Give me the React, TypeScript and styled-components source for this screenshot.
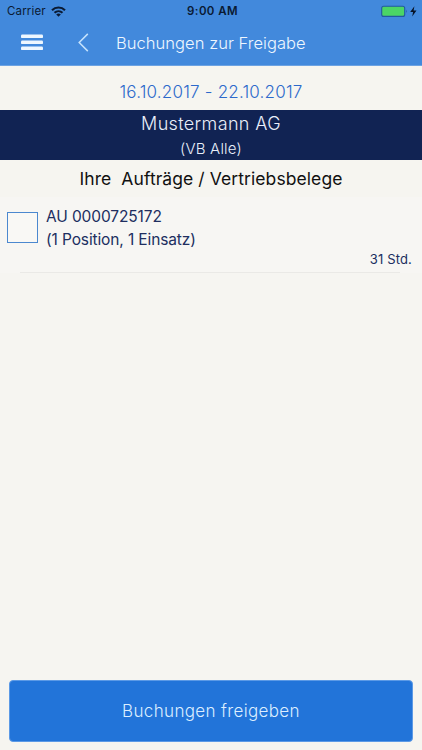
import React from "react";
import styled, { createGlobalStyle } from "styled-components";

const GlobalStyle = createGlobalStyle`
  * { box-sizing: border-box; }
  body { margin: 0; background: #f6f5f0; }
`;

const Label = styled.span<{ $size: number; $spacing?: number; $weight?: number }>`
  font-size: ${(p) => p.$size}px;
  letter-spacing: ${(p) => p.$spacing ?? 0}px;
  font-weight: ${(p) => p.$weight ?? 350};
  white-space: pre;
`;

const Screen = styled.div`
  width: 422px;
  height: 750px;
  display: flex;
  flex-direction: column;
  overflow: hidden;
  background: #f6f5f0;
  font-family: Inter, "Liberation Sans", sans-serif;
`;

const Header = styled.header`
  height: 66px;
  flex: none;
  background: #4289dc;
  border-bottom: 1px solid #6da3e2;
`;

const StatusBar = styled.div`
  height: 22px;
  display: grid;
  grid-template-columns: 1fr auto 1fr;
  align-items: center;
  padding: 0 4px 0 7px;
  color: #0a1a33;
`;

const StatusSide = styled.div<{ $end?: boolean }>`
  display: flex;
  align-items: center;
  gap: 5px;
  justify-content: ${(p) => (p.$end ? "flex-end" : "flex-start")};
`;

const NavBar = styled.nav`
  height: 41px;
  display: flex;
  align-items: center;
  color: #eef7ff;
`;

const IconButton = styled.button<{ $left: number; $width: number }>`
  width: ${(p) => p.$width}px;
  margin: 0 0 0 ${(p) => p.$left}px;
  padding: 0;
  border: 0;
  background: none;
  color: inherit;
  display: flex;
`;

const NavTitle = styled.h1`
  margin: 0 0 0 27px;
  font-size: 16.5px;
  line-height: 20px;
  display: flex;
`;

const DateRange = styled.div`
  height: 44px;
  padding-top: 8px;
  flex: none;
  display: flex;
  align-items: center;
  justify-content: center;
  line-height: 22px;
  color: #2c69cb;
`;

const Customer = styled.section`
  height: 50px;
  flex: none;
  display: flex;
  flex-direction: column;
  align-items: center;
  padding-top: 1px;
  line-height: 25px;
  background: #112353;
  color: #e9effa;
`;

const SectionTitle = styled.h2`
  margin: 0;
  height: 37px;
  flex: none;
  display: flex;
  align-items: center;
  justify-content: center;
  line-height: 22px;
  color: #111;
`;

const Orders = styled.main`
  flex: 1;
  background: #f6f5f1;
`;

const OrderRow = styled.article`
  height: 76px;
  display: grid;
  grid-template-columns: 31px 1fr;
  column-gap: 8px;
  align-content: start;
  padding: 8px 10px 0 7px;
  background: #f7f6f3;
  color: #202e60;
`;

const CheckBox = styled.div`
  width: 31px;
  height: 31px;
  margin-top: 7px;
  border: 1px solid #4b88cf;
  background: #f9f8f5;
`;

const OrderText = styled.div`
  display: flex;
  flex-direction: column;
  padding-top: 1px;
  line-height: 22.5px;
`;

const Hours = styled.div`
  grid-column: 1 / -1;
  display: flex;
  justify-content: flex-end;
  line-height: 16px;
`;

const Divider = styled.hr`
  margin: -1px 22px 0 20px;
  border: 0;
  height: 1px;
  background: #eae9e6;
`;

const Footer = styled.footer`
  padding: 0 9px 8px;
  flex: none;
`;

const PrimaryButton = styled.button`
  width: 100%;
  height: 62px;
  display: flex;
  align-items: center;
  justify-content: center;
  border: 1px solid #5c9ae6;
  border-radius: 4px;
  background: #2274d9;
  color: #dceeff;
  font-family: inherit;
  padding: 0;
`;

const WifiIcon = () => (
  <svg width="15" height="11" viewBox="0 0 15 11" fill="none" stroke="currentColor" strokeWidth="2.1">
    <path d="M1 4.2C4.6.6 10.4.6 14 4.2" />
    <path d="M3.5 6.8C5.8 4.7 9.2 4.7 11.5 6.8" />
    <path d="M7.5 10.8 5.2 8.5C6.5 7.3 8.5 7.3 9.8 8.5Z" fill="currentColor" stroke="none" />
  </svg>
);

const BatteryIcon = () => (
  <svg width="37" height="13" viewBox="0 0 37 13">
    <rect x=".7" y="1.2" width="23" height="10.2" rx="2" fill="#4bd566" stroke="#23599f" strokeWidth="1.1" />
    <path d="M25.3 4.6q1.5 1.7 0 3.4z" fill="#23599f" />
    <path d="M33.4 1.2 29.2 7h2.9l-.9 4.6 4.3-6.2h-2.9z" fill="#071326" />
  </svg>
);

const MenuIcon = () => (
  <svg width="22" height="17" viewBox="0 0 22 17" fill="currentColor">
    <rect y=".5" width="22" height="3.6" rx="1.2" />
    <rect y="6.5" width="22" height="3.6" rx="1.2" />
    <rect y="12.5" width="22" height="3.6" rx="1.2" />
  </svg>
);

const BackIcon = () => (
  <svg width="11" height="19" viewBox="0 0 11 19" fill="none" stroke="#c5e2fc" strokeWidth="1.5">
    <path d="M9.8 .9 1.2 9.5l8.6 8.6" />
  </svg>
);

export default function App() {
  return (
    <Screen>
      <GlobalStyle />
      <Header>
        <StatusBar>
          <StatusSide>
            <Label $size={11.5} $spacing={0.15} $weight={400}>Carrier</Label>
            <WifiIcon />
          </StatusSide>
          <Label $size={11.5} $spacing={0.4} $weight={600}>9:00 AM</Label>
          <StatusSide $end>
            <BatteryIcon />
          </StatusSide>
        </StatusBar>
        <NavBar>
          <IconButton $left={21} $width={22} aria-label="Menü"><MenuIcon /></IconButton>
          <IconButton $left={35} $width={11} aria-label="Zurück"><BackIcon /></IconButton>
          <NavTitle><Label $size={16.5} $spacing={0.05}>Buchungen zur Freigabe</Label></NavTitle>
        </NavBar>
      </Header>
      <DateRange><Label $size={17} $spacing={0.2}>16.10.2017 - 22.10.2017</Label></DateRange>
      <Customer>
        <Label $size={18} $spacing={0.35}>Mustermann AG</Label>
        <Label $size={15} $spacing={0.2}>(VB Alle)</Label>
      </Customer>
      <SectionTitle><Label $size={17.5} $spacing={0.08} $weight={400}>{"Ihre  Aufträge / Vertriebsbelege"}</Label></SectionTitle>
      <Orders>
        <OrderRow>
          <CheckBox role="checkbox" aria-checked="false" />
          <OrderText>
            <Label $size={15.5} $spacing={-0.12} $weight={400}>AU 0000725172</Label>
            <Label $size={15.5} $spacing={-0.12} $weight={400}>(1 Position, 1 Einsatz)</Label>
          </OrderText>
          <Hours><Label $size={13} $spacing={0.15} $weight={400}>31 Std.</Label></Hours>
        </OrderRow>
        <Divider />
      </Orders>
      <Footer>
        <PrimaryButton><Label $size={17} $spacing={0.35}>Buchungen freigeben</Label></PrimaryButton>
      </Footer>
    </Screen>
  );
}
